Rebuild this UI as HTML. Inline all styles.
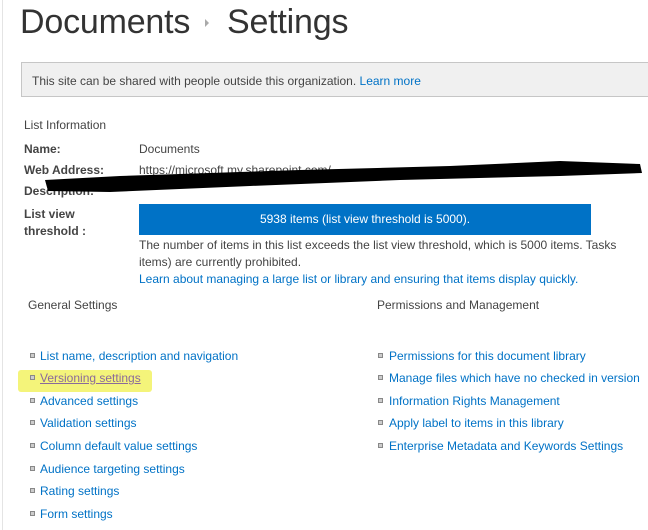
<!DOCTYPE html>
<html><head><meta charset="utf-8"><style>
*{margin:0;padding:0;box-sizing:border-box}
body{width:648px;height:530px;overflow:hidden;background:#fff;font-family:"Liberation Sans",sans-serif;font-size:12px;color:#444;position:relative}
.a{position:absolute;white-space:nowrap}
.t{font-size:34px;color:#333;top:3px;letter-spacing:-0.2px}
.lb{font-weight:bold;color:#444;left:24px}
.ln{color:#0072c6}
.b{position:absolute;width:5px;height:5px;border:1px solid #888;background:#ccc}
</style></head><body>
<div style="position:absolute;left:2px;top:0;width:1px;height:530px;background:#e4e4e4"></div>
<div class="a t" style="left:20px">Documents</div>
<div class="a" style="left:205px;top:19px;width:0;height:0;border-left:4px solid #aaa;border-top:4px solid transparent;border-bottom:4px solid transparent"></div>
<div class="a t" style="left:227px">Settings</div>
<div style="position:absolute;left:21px;top:62px;width:640px;height:35px;background:#f0f0f0;border:1px solid #c6c6c6"></div>
<div class="a" style="left:32px;top:74px">This site can be shared with people outside this organization. <span class="ln">Learn more</span></div>
<div class="a" style="left:24px;top:118px">List Information</div>
<div class="a lb" style="top:142px">Name:</div>
<div class="a" style="left:139px;top:142px">Documents</div>
<div class="a lb" style="top:163px">Web Address:</div>
<div class="a" style="left:139px;top:163px">https://microsoft.my.sharepoint.com/</div>
<div class="a lb" style="top:184px">Description:</div>
<div class="a lb" style="top:206px;line-height:17px">List view<br>threshold :</div>
<div style="position:absolute;left:139px;top:204px;width:452px;height:31px;background:#0072c6;color:#fff;text-align:center;line-height:31px">5938 items (list view threshold is 5000).</div>
<div class="a" style="left:139px;top:237px;line-height:17px">The number of items in this list exceeds the list view threshold, which is 5000 items. Tasks<br>items) are currently prohibited.<br><span class="ln">Learn about managing a large list or library and ensuring that items display quickly.</span></div>
<svg class="a" style="left:0;top:0" width="648" height="530"><path d="M45 180 L120 176 L300 170 L450 166 L560 161 L640 164 L642 173 L560 176 L400 180 L250 186 L110 192 L48 191 Z" fill="#000"/></svg>
<div class="a" style="left:28px;top:298px">General Settings</div>
<div class="a" style="left:377px;top:298px">Permissions and Management</div>
<div style="position:absolute;left:18px;top:370px;width:134px;height:22px;background:#f4f47a;border-radius:3px"></div>
<div class="b" style="left:30px;top:353px"></div><div class="a ln" style="left:40px;top:349px">List name, description and navigation</div>
<div class="b" style="left:30px;top:375px"></div><div class="a" style="left:40px;top:371px;color:#8a6a9a;text-decoration:underline">Versioning settings</div>
<div class="b" style="left:30px;top:398px"></div><div class="a ln" style="left:40px;top:394px">Advanced settings</div>
<div class="b" style="left:30px;top:420px"></div><div class="a ln" style="left:40px;top:416px">Validation settings</div>
<div class="b" style="left:30px;top:443px"></div><div class="a ln" style="left:40px;top:439px">Column default value settings</div>
<div class="b" style="left:30px;top:466px"></div><div class="a ln" style="left:40px;top:462px">Audience targeting settings</div>
<div class="b" style="left:30px;top:488px"></div><div class="a ln" style="left:40px;top:484px">Rating settings</div>
<div class="b" style="left:30px;top:511px"></div><div class="a ln" style="left:40px;top:507px">Form settings</div>
<div class="b" style="left:378px;top:353px"></div><div class="a ln" style="left:389px;top:349px">Permissions for this document library</div>
<div class="b" style="left:378px;top:375px"></div><div class="a ln" style="left:389px;top:371px">Manage files which have no checked in version</div>
<div class="b" style="left:378px;top:398px"></div><div class="a ln" style="left:389px;top:394px">Information Rights Management</div>
<div class="b" style="left:378px;top:420px"></div><div class="a ln" style="left:389px;top:416px">Apply label to items in this library</div>
<div class="b" style="left:378px;top:443px"></div><div class="a ln" style="left:389px;top:439px">Enterprise Metadata and Keywords Settings</div>
</body></html>
